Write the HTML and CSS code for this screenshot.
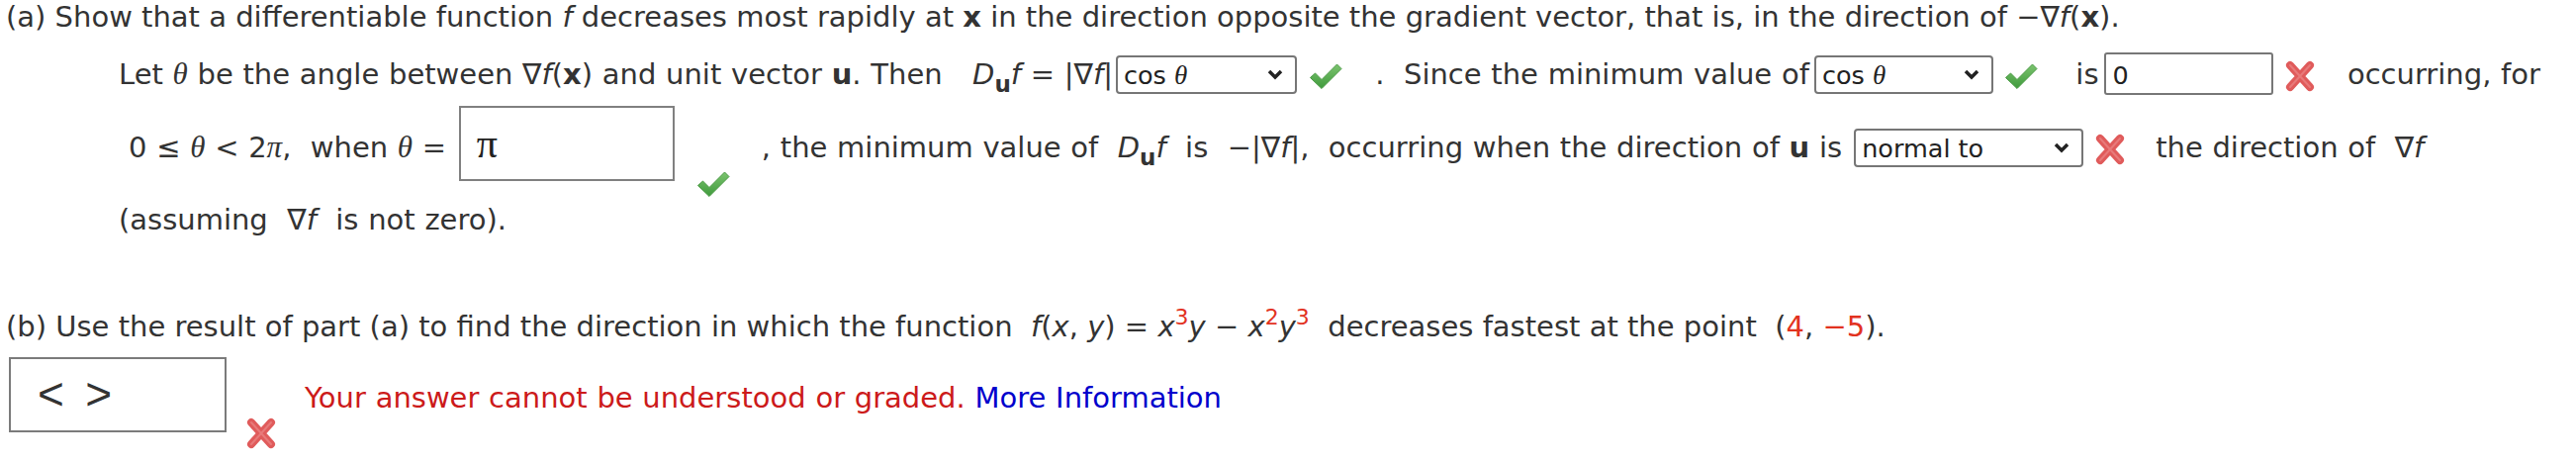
FILE: index.html
```html
<!DOCTYPE html>
<html lang="en">
<head>
<meta charset="utf-8">
<title>Directional derivative question</title>
<link rel="stylesheet" href="styles.css">
</head>
<body>
<div class="page">
  <p class="q">(a) Show that a differentiable function <i class="mi">f</i> decreases most rapidly at <b>x</b> in the direction opposite the gradient vector, that is, in the direction of −∇<i class="mi">f</i>(<b>x</b>).</p>

  <div class="part">
    <div class="row row-let">Let <i class="gr">θ</i> be the angle between ∇<i class="mi">f</i>(<b>x</b>) and unit vector <b>u</b>. Then&nbsp; <span class="dgroup"><i class="mi">D</i><sub class="sub">u</sub><i class="mi">f</i> = |∇<i class="mi">f</i>|</span><span class="sel sel-a"><span class="sel-text">cos <i class="gr">θ</i></span><svg class="chev" width="16" height="11" viewBox="0 0 16 11"><polyline points="2,2 8,8 14,2" fill="none" stroke="#222" stroke-width="3.5"/></svg></span><svg class="ok ok-1" width="34" height="28" viewBox="0 0 34 28"><defs><linearGradient id="g1" x1="0" y1="0" x2="0" y2="1"><stop offset="0" stop-color="#7cc46f"/><stop offset="1" stop-color="#3f9a3c"/></linearGradient></defs><path d="M1.5 15.5 L6.5 11 L13 17.5 L28.5 2 L33 6.5 L13 26.5 Z" fill="url(#g1)" stroke="#4a9a44" stroke-width="1" stroke-linejoin="round"/></svg>&nbsp; . &nbsp;Since the minimum value of<span class="sel sel-b"><span class="sel-text">cos <i class="gr">θ</i></span><svg class="chev" width="16" height="11" viewBox="0 0 16 11"><polyline points="2,2 8,8 14,2" fill="none" stroke="#222" stroke-width="3.5"/></svg></span><svg class="ok ok-2" width="34" height="28" viewBox="0 0 34 28"><path d="M1.5 15.5 L6.5 11 L13 17.5 L28.5 2 L33 6.5 L13 26.5 Z" fill="url(#g1)" stroke="#4a9a44" stroke-width="1" stroke-linejoin="round"/></svg>&nbsp; is<span class="inp">0</span><svg class="no no-1" width="32" height="34" viewBox="0 0 32 34"><path d="M6 6 L26 28 M26 6 L6 28" stroke="#e05b5b" stroke-width="8" stroke-linecap="round"/><path d="M6 6 L26 28 M26 6 L6 28" stroke="#f09a9a" stroke-width="2" stroke-linecap="round" opacity="0.5"/></svg>&nbsp; occurring, for</div>

    <div class="row row-theta"><span class="lead">0 ≤ <i class="gr">θ</i> &lt; 2<i class="gr">π</i>,</span>&nbsp; when <i class="gr">θ</i> = <span class="mq">π</span><svg class="ok ok-low" width="34" height="28" viewBox="0 0 34 28"><path d="M1.5 15.5 L6.5 11 L13 17.5 L28.5 2 L33 6.5 L13 26.5 Z" fill="url(#g1)" stroke="#4a9a44" stroke-width="1" stroke-linejoin="round"/></svg><span class="after-check">, the minimum value of&nbsp; <i class="mi">D</i><sub class="sub">u</sub><i class="mi">f</i>&nbsp; is&nbsp; −|∇<i class="mi">f</i>|,&nbsp; occurring when the direction of <b>u</b> is</span><span class="sel sel-c"><span class="sel-text">normal to</span><svg class="chev" width="16" height="11" viewBox="0 0 16 11"><polyline points="2,2 8,8 14,2" fill="none" stroke="#222" stroke-width="3.5"/></svg></span><svg class="no no-2" width="32" height="34" viewBox="0 0 32 34"><path d="M6 6 L26 28 M26 6 L6 28" stroke="#e05b5b" stroke-width="8" stroke-linecap="round"/><path d="M6 6 L26 28 M26 6 L6 28" stroke="#f09a9a" stroke-width="2" stroke-linecap="round" opacity="0.5"/></svg><span class="tail">the direction of&nbsp; ∇<i class="mi">f</i></span></div>

    <div class="row row-assume">(assuming&nbsp; ∇<i class="mi">f</i>&nbsp; is not zero).</div>
  </div>

  <p class="q q-b">(b) Use the result of part (a) to find the direction in which the function&nbsp; <i class="mi">f</i>(<i class="mi">x</i>, <i class="mi">y</i>) = <i class="mi">x</i><sup class="sup red">3</sup><i class="mi">y</i> − <i class="mi">x</i><sup class="sup red">2</sup><i class="mi">y</i><sup class="sup red">3</sup>&nbsp; decreases fastest at the point&nbsp; (<span class="red">4</span>, <span class="red">−5</span>).</p>

  <div class="answer">
    <div class="ans-box"><span class="brackets">&lt; &gt;</span></div>
    <svg class="no no-ans" width="32" height="34" viewBox="0 0 32 34"><path d="M6 6 L26 28 M26 6 L6 28" stroke="#e05b5b" stroke-width="8" stroke-linecap="round"/><path d="M6 6 L26 28 M26 6 L6 28" stroke="#f09a9a" stroke-width="2" stroke-linecap="round" opacity="0.5"/></svg>
    <p class="err">Your answer cannot be understood or graded. <a class="more" href="#">More Information</a></p>
  </div>
</div>
</body>
</html>
```

FILE: styles.css
```css
body {
  margin: 0;
  background: #ffffff;
  color: #333333;
  font-family: "DejaVu Sans", Verdana, sans-serif;
  font-size: 29px;
  word-spacing: 0.5px;
}

.page {
  padding-left: 6px;
}

.q {
  margin: 0;
  white-space: nowrap;
  word-spacing: 0;
}

.q-b {
  margin-top: 74px;
}

.part {
  padding-left: 114px;
}

.row {
  white-space: nowrap;
}

.row-let {
  margin-top: 19px;
}

.row-theta {
  margin-top: 11px;
}

.row-assume {
  margin-top: 5px;
}

.lead {
  margin-left: 10px;
}

.dgroup {
  margin-left: 11px;
}

.mi {
  font-style: italic;
}

.gr {
  font-family: "Liberation Serif", "Times New Roman", serif;
  font-style: italic;
  font-size: 31px;
}

.sub {
  font-weight: bold;
  font-size: 23px;
  vertical-align: -8px;
  line-height: 0;
}

.sup {
  font-size: 22px;
  vertical-align: 12px;
  line-height: 0;
}

.red {
  color: #e2321f;
}

.sel {
  display: inline-flex;
  align-items: flex-start;
  justify-content: space-between;
  box-sizing: border-box;
  height: 39px;
  padding: 3px 12px 0 6px;
  border: 2px solid #767676;
  border-radius: 4px;
  font-size: 25.5px;
  word-spacing: 0;
  color: #222222;
  background: #ffffff;
}

.sel .gr {
  font-size: 27px;
}

.sel-a {
  width: 183px;
  margin-left: 3px;
}

.sel-b {
  width: 181px;
  margin-left: 5px;
}

.sel-c {
  width: 232px;
  margin-left: 12px;
}

.chev {
  align-self: center;
  margin-top: -3px;
}

.inp {
  display: inline-block;
  box-sizing: border-box;
  width: 171px;
  height: 43px;
  padding: 6px 0 0 7px;
  border: 2px solid #777777;
  border-radius: 3px;
  font-size: 25.5px;
  color: #222222;
  margin-left: 5px;
}

.ok {
  vertical-align: -6px;
}

.ok-1 {
  margin-left: 12px;
  margin-right: 14px;
}

.ok-2 {
  margin-left: 11px;
  margin-right: 19px;
}

.ok-low {
  margin-left: 22px;
  vertical-align: -41px;
}

.after-check {
  margin-left: 32px;
}

.no {
  vertical-align: -9px;
}

.no-1 {
  margin-left: 11px;
  margin-right: 13px;
}

.no-2 {
  margin-left: 11px;
}

.tail {
  margin-left: 30px;
}

.mq {
  display: inline-block;
  box-sizing: border-box;
  width: 218px;
  height: 76px;
  padding: 12px 0 0 16px;
  border: 2px solid #808080;
  font-family: "Liberation Serif", "Times New Roman", serif;
  font-size: 42px;
  color: #222222;
  margin-left: 3px;
}

.answer {
  display: flex;
  align-items: flex-start;
  margin-top: 14px;
  padding-left: 3px;
}

.ans-box {
  box-sizing: border-box;
  width: 220px;
  height: 76px;
  border: 2px solid #7b7b7b;
  padding: 8px 0 0 27px;
}

.brackets {
  font-family: "Liberation Sans", Arial, sans-serif;
  font-size: 46px;
  color: #333333;
  letter-spacing: 4px;
}

.no-ans {
  margin: 60px 0 0 19px;
}

.err {
  margin: 24px 0 0 28px;
  color: #cc1a1a;
  white-space: nowrap;
}

.more {
  color: #0000cc;
  text-decoration: none;
}
```
